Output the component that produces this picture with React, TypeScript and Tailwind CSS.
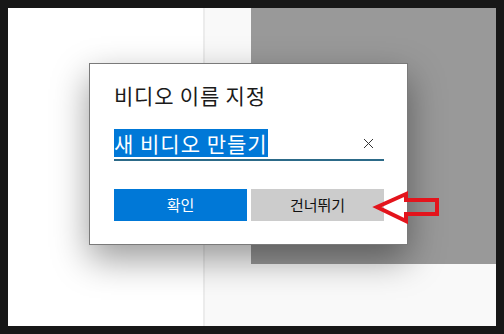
import React from "react";

export default function App() {
  const font = { fontFamily: '"Noto Sans CJK KR", "Noto Sans", sans-serif' };
  return (
    <div className="w-[504px] h-[334px] bg-[#171717] p-2 relative overflow-hidden" style={font}>
      <div className="flex w-full h-full">
        <div className="w-[195px] h-full bg-white" />
        <div className="w-[2px] h-full bg-[#ececec]" />
        <div className="flex-1 h-full bg-[#f9f9f9] flex flex-col">
          <div className="pl-[46px]">
            <div className="h-[256px] bg-[#999999]" />
          </div>
        </div>
      </div>

      <div className="absolute left-[89px] top-[63px] w-[319px] h-[182px] bg-white border border-[#7a7a7a] shadow-[0_14px_34px_rgba(0,0,0,0.4)] pl-6 pr-[23px] pt-[17px]">
        <div className="text-[21px] leading-[28px] text-[#1b1b1b] tracking-[0.8px]">비디오 이름 지정</div>
        <div className="mt-5 flex items-center justify-between h-[28px]">
          <span className="bg-[#0078d7] text-white text-[21px] leading-[28px] tracking-[1px]">새 비디오 만들기</span>
          <svg width="11" height="11" viewBox="0 0 11 11" className="mr-[10px]">
            <path d="M1 1 L10 10 M10 1 L1 10" stroke="#333" strokeWidth="1" fill="none" />
          </svg>
        </div>
        <div className="mt-[2px] h-[2px] bg-[#2c6a88]" />
        <div className="mt-[28px] flex gap-1">
          <button className="w-[133px] h-[32px] bg-[#0078d7] text-white text-[15px]">확인</button>
          <button className="w-[133px] h-[32px] bg-[#cccccc] text-[#111] text-[15px]">건너뛰기</button>
        </div>
      </div>

      <svg className="absolute left-[370px] top-[188px]" width="72" height="40" viewBox="370 188 72 40">
        <polygon
          points="377,207 406,194 406,200 437,200 437,214 406,214 406,221"
          fill="none"
          stroke="#e3141c"
          strokeWidth="4"
          strokeLinejoin="miter"
        />
      </svg>
    </div>
  );
}
